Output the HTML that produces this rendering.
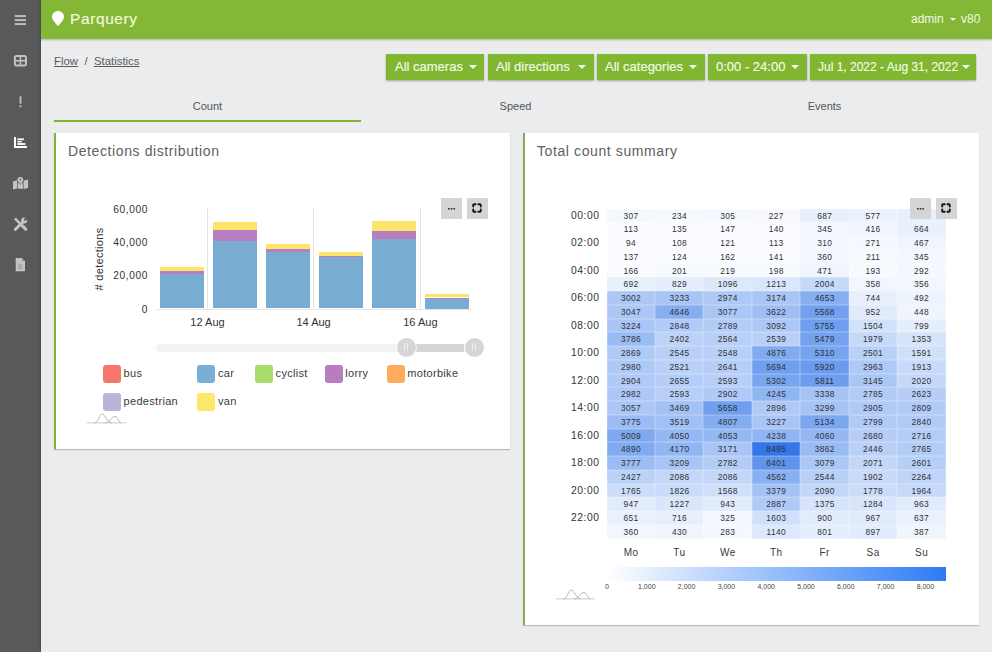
<!DOCTYPE html>
<html><head><meta charset="utf-8">
<style>
*{margin:0;padding:0;box-sizing:border-box}
html,body{width:992px;height:652px;overflow:hidden;background:#ebecee;font-family:"Liberation Sans",sans-serif;position:relative}
.stk{-webkit-text-stroke:0.15px currentColor}
.a{position:absolute}
#side{position:absolute;left:0;top:0;width:40.5px;height:652px;background:#58595b;box-shadow:inset -1.5px 0 0 #4c4d4f;z-index:2}
#head{position:absolute;left:40px;top:0;width:952px;height:38.5px;background:#83b735;box-shadow:0 1px 2px rgba(0,0,0,.25)}
.btn{position:absolute;top:54px;height:26px;background:#80b630;-webkit-text-stroke:0.15px currentColor;color:#f4fbe8;font-size:13px;line-height:26px;white-space:nowrap;box-shadow:0 1px 2px rgba(0,0,0,.3)}
.btn span{position:absolute;top:0}
.caret{position:absolute;top:10.5px;width:0;height:0;border-left:4px solid transparent;border-right:4px solid transparent;border-top:4px solid #f4fbe8}
.tab{position:absolute;top:99px;font-size:11px;color:#555;line-height:14px;text-align:center;width:307px}
.card{position:absolute;background:#fff;border-left:2px solid #7fb140;box-shadow:0 1px 1px rgba(0,0,0,.22)}
.title{position:absolute;font-size:14px;color:#606060;letter-spacing:0.6px;line-height:16px;white-space:nowrap}
.ib{position:absolute;width:21px;height:21px;background:#d5d5d7}
.bar{position:absolute;width:44px}
.yl{position:absolute;right:844px;font-size:10.2px;color:#333;letter-spacing:0.6px;line-height:12px;margin-top:1px;white-space:nowrap}
.xl{position:absolute;top:316px;font-size:11px;color:#333;line-height:12px;width:60px;text-align:center}
.sw{position:absolute;width:18px;height:17.5px;border-radius:3px;margin-left:0.5px}
.lt{position:absolute;font-size:11px;color:#3a3a3a;line-height:18px;letter-spacing:0.3px;white-space:nowrap}
.hc{position:absolute;font-size:8.4px;color:#303236;text-align:center;line-height:15px;letter-spacing:0.35px;text-indent:0.35px;box-shadow:inset 0 0 0 0.5px rgba(255,255,255,.35)}
.hl{position:absolute;left:560px;width:39.5px;text-align:right;font-size:10.3px;color:#333;line-height:14px;letter-spacing:0.55px;margin-top:0.3px}
.dl{position:absolute;top:545.7px;text-align:center;font-size:10px;color:#3a3a3a;line-height:14px;letter-spacing:0.45px;text-indent:0.45px}
.sl{position:absolute;top:582px;width:40px;text-align:center;font-size:7px;color:#444;line-height:9px}
</style></head><body>
<div id="side">
<svg class="a" style="left:0;top:0" width="41" height="290" viewBox="0 0 41 290">
<g fill="#bdbdbd">
<rect x="14.7" y="15.1" width="11.3" height="2"/><rect x="14.7" y="19.1" width="11.3" height="2"/><rect x="14.7" y="23.1" width="11.3" height="2"/>
</g>
<rect x="14.9" y="56.1" width="11.1" height="9.3" rx="1.6" fill="none" stroke="#c2c2c2" stroke-width="2"/>
<rect x="19.6" y="56" width="1.6" height="10" fill="#c2c2c2"/><rect x="14" y="59.9" width="13" height="1.7" fill="#c2c2c2"/>
<rect x="19.5" y="96" width="2" height="8" rx="1" fill="#b5b5b5"/><rect x="19.5" y="105.2" width="2" height="2" fill="#b5b5b5"/>
<g fill="#fff">
<path d="M14 137h2v9h11v2H14z"/>
<rect x="17.3" y="138.4" width="6.6" height="1.7"/><rect x="17.3" y="140.9" width="4.6" height="1.5"/><rect x="17.3" y="143.1" width="8.1" height="1.8"/>
</g>
<g fill="#c4c4c4">
<path d="M13 181.5l4-1.3v8.2l-4 1.2z"/>
<path d="M17.7 182.7l1.5 0.6 1.1 1.6 1.1-1.6 1.5-0.6v6.2l-5.2-0.5z"/>
<path d="M23.6 180.8l4.5-1.3v8.4l-4.5 1.2z"/>
<path d="M20.3 176.9a2.9 2.9 0 0 1 2.9 2.9c0 1.6-2.9 4.2-2.9 4.2s-2.9-2.6-2.9-4.2a2.9 2.9 0 0 1 2.9-2.9z"/>
</g>
<circle cx="20.3" cy="179.6" r="0.9" fill="#58595b"/>
<g stroke="#c4c4c4" stroke-linecap="round" fill="none">
<line x1="15.6" y1="219.2" x2="19.6" y2="223.2" stroke-width="2.6"/>
<line x1="21.6" y1="225.2" x2="25.7" y2="229.2" stroke-width="3.2"/>
<line x1="15.4" y1="229.4" x2="22.6" y2="222.2" stroke-width="2.9"/>
</g>
<circle cx="24.2" cy="220.6" r="3" fill="#c4c4c4"/>
<circle cx="25.3" cy="219.5" r="1.3" fill="#58595b"/>
<path d="M25.3 218.2l3-3 1.8 1.8-3 3z" fill="#58595b"/>
<path d="M15.7 258h6.3l3 3v10.2h-9.3z" fill="#c4c4c4"/>
<path d="M22 258v3h3" fill="#58595b" opacity="0.5"/>
<g fill="#8a8a8c"><rect x="18" y="264.5" width="4.5" height="0.8"/><rect x="18" y="266.3" width="4.5" height="0.8"/><rect x="18" y="268.1" width="4.5" height="0.8"/></g>
</svg>
</div>
<div id="head"></div>
<svg class="a" style="left:52px;top:11px" width="12" height="15" viewBox="0 0 12 15"><path d="M6 0C2.7 0 0 2.6 0 5.8 0 9.5 6 15 6 15s6-5.5 6-9.2C12 2.6 9.3 0 6 0z" fill="#fff"/></svg>
<div class="a stk" style="left:70px;top:9px;font-size:15.5px;color:#f2fadf;letter-spacing:0.6px;line-height:20px">Parquery</div>
<div class="a" style="left:911px;top:12px;font-size:12px;color:#f0f9e0;line-height:14px">admin</div>
<div class="a" style="left:949.5px;top:17.5px;width:0;height:0;border-left:3px solid transparent;border-right:3px solid transparent;border-top:3px solid #f0f9e0"></div>
<div class="a" style="left:961px;top:12px;font-size:12px;color:#f0f9e0;line-height:14px">v80</div>

<div class="a" style="left:54px;top:53.5px;font-size:11.4px;color:#5a5a5a;line-height:14px;white-space:nowrap"><span style="text-decoration:underline">Flow</span>&nbsp; /&nbsp; <span style="text-decoration:underline">Statistics</span></div>

<div class="btn" style="left:386px;width:98px"><span style="left:9px">All cameras</span><div class="caret" style="left:83px"></div></div>
<div class="btn" style="left:488px;width:106px"><span style="left:8px">All directions</span><div class="caret" style="left:90px"></div></div>
<div class="btn" style="left:597px;width:108px"><span style="left:8px">All categories</span><div class="caret" style="left:92px"></div></div>
<div class="btn" style="left:708px;width:99px"><span style="left:8px">0:00 - 24:00</span><div class="caret" style="left:83px"></div></div>
<div class="btn" style="left:810px;width:166px;font-size:12px"><span style="left:8px">Jul 1, 2022 - Aug 31, 2022</span><div class="caret" style="left:152px"></div></div>

<div class="tab" style="left:54px">Count</div>
<div class="tab" style="left:362px">Speed</div>
<div class="tab" style="left:671px">Events</div>
<div class="a" style="left:54px;top:120px;width:307px;height:2px;background:#7db532"></div>

<div class="card" style="left:54px;top:133px;width:456px;height:316px"></div>
<div class="title" style="left:68px;top:143px">Detections distribution</div>
<div class="ib" style="left:441px;top:198px"><svg class="a" style="left:7px;top:10px" width="7" height="2"><rect x="0" y="0" width="1.6" height="1.6" fill="#333"/><rect x="2.7" y="0" width="1.6" height="1.6" fill="#333"/><rect x="5.4" y="0" width="1.6" height="1.6" fill="#333"/></svg></div>
<div class="ib" style="left:467px;top:198px"><svg class="a" style="left:5px;top:5px" width="10" height="10" viewBox="0 0 10 10"><path d="M1.2 3.6V2.2q0-1 1-1h1.4 M6.4 1.2h1.4q1 0 1 1v1.4 M8.8 6.4v1.4q0 1-1 1H6.4 M3.6 8.8H2.2q-1 0-1-1V6.4" stroke="#111" stroke-width="1.9" fill="none" stroke-linecap="round"/></svg></div>

<div class="a" style="left:207px;top:208px;width:1px;height:101px;background:#e3e3e3"></div>
<div class="a" style="left:313px;top:208px;width:1px;height:101px;background:#e3e3e3"></div>
<div class="a" style="left:420px;top:208px;width:1px;height:101px;background:#e3e3e3"></div>
<div class="a" style="left:156px;top:308.5px;width:317px;height:1px;background:#e6e6e6"></div>
<div class="bar" style="left:159.6px;top:274.3px;height:34.19999999999999px;background:#78acd3"></div><div class="bar" style="left:159.6px;top:271.3px;height:3.0px;background:#b77fc0"></div><div class="bar" style="left:159.6px;top:266.6px;height:4.699999999999989px;background:#fde56c"></div><div class="bar" style="left:212.7px;top:240.9px;height:67.6px;background:#78acd3"></div><div class="bar" style="left:212.7px;top:230.3px;height:10.599999999999994px;background:#b77fc0"></div><div class="bar" style="left:212.7px;top:222.2px;height:8.100000000000023px;background:#fde56c"></div><div class="bar" style="left:266px;top:251.7px;height:56.80000000000001px;background:#78acd3"></div><div class="bar" style="left:266px;top:249.4px;height:2.299999999999983px;background:#b77fc0"></div><div class="bar" style="left:266px;top:244.3px;height:5.099999999999994px;background:#fde56c"></div><div class="bar" style="left:318.8px;top:256.6px;height:51.89999999999998px;background:#78acd3"></div><div class="bar" style="left:318.8px;top:255.6px;height:1.0000000000000284px;background:#b77fc0"></div><div class="bar" style="left:318.8px;top:251.7px;height:3.9000000000000057px;background:#fde56c"></div><div class="bar" style="left:372px;top:238.9px;height:69.6px;background:#78acd3"></div><div class="bar" style="left:372px;top:231px;height:7.900000000000006px;background:#b77fc0"></div><div class="bar" style="left:372px;top:221.2px;height:9.800000000000011px;background:#fde56c"></div><div class="bar" style="left:425.3px;top:298px;height:10.5px;background:#78acd3"></div><div class="bar" style="left:425.3px;top:297.5px;height:0.5px;background:#b77fc0"></div><div class="bar" style="left:425.3px;top:294.4px;height:3.1000000000000227px;background:#fde56c"></div>
<div class="yl" style="top:202.5px">60,000</div>
<div class="yl" style="top:235.5px">40,000</div>
<div class="yl" style="top:269px">20,000</div>
<div class="yl" style="top:302.5px">0</div>
<div class="a" style="left:59px;top:252px;width:80px;height:14px;font-size:11px;color:#333;line-height:14px;text-align:center;transform:rotate(-90deg);white-space:nowrap;letter-spacing:0.3px">#&nbsp;detections</div>
<div class="xl" style="left:177.5px">12 Aug</div>
<div class="xl" style="left:283.6px">14 Aug</div>
<div class="xl" style="left:390.4px">16 Aug</div>

<div class="a" style="left:156px;top:343.5px;width:320px;height:8px;border-radius:4px;background:#f2f3f5"></div>
<div class="a" style="left:416px;top:343.5px;width:48px;height:8px;background:#d5d6d8"></div>
<div class="a" style="left:396.5px;top:337.7px;width:19.5px;height:19.5px;border-radius:50%;background:#d5d6d8;box-shadow:0 0 0 1px rgba(255,255,255,.7)"></div>
<div class="a" style="left:464.5px;top:337.7px;width:19.5px;height:19.5px;border-radius:50%;background:#d5d6d8;box-shadow:0 0 0 1px rgba(255,255,255,.7)"></div>
<div class="a" style="left:404px;top:343px;width:1px;height:8px;background:#eceded"></div>
<div class="a" style="left:407px;top:343px;width:1px;height:8px;background:#eceded"></div>
<div class="a" style="left:472px;top:343px;width:1px;height:8px;background:#eceded"></div>
<div class="a" style="left:475px;top:343px;width:1px;height:8px;background:#eceded"></div>
<div class="sw" style="left:102.3px;top:365px;background:#f7766b"></div><div class="lt" style="left:123.6px;top:364px">bus</div><div class="sw" style="left:196.7px;top:365px;background:#7aafd5"></div><div class="lt" style="left:218.0px;top:364px">car</div><div class="sw" style="left:254.3px;top:365px;background:#a8dc6a"></div><div class="lt" style="left:275.6px;top:364px">cyclist</div><div class="sw" style="left:324px;top:365px;background:#b87dbf"></div><div class="lt" style="left:345.3px;top:364px">lorry</div><div class="sw" style="left:386px;top:365px;background:#fdab5c"></div><div class="lt" style="left:407.3px;top:364px">motorbike</div><div class="sw" style="left:102.3px;top:393.4px;background:#b8b5d8"></div><div class="lt" style="left:123.6px;top:392.4px">pedestrian</div><div class="sw" style="left:196.7px;top:393.4px;background:#fde86a"></div><div class="lt" style="left:218.0px;top:392.4px">van</div>
<svg class="a" style="left:87px;top:413px" width="40" height="11" viewBox="0 0 40 11"><path d="M0 9.9h39" stroke="#c4c4c4" stroke-width="0.9"/><path d="M7.5 9.9C11.5 9.9 12.2 1.1 15.2 1.1S20 9.9 25 9.9 M18 9.9C23 9.9 24.5 3.4 27.9 3.4S31.5 9.9 34 9.9" stroke="#b0b0b0" stroke-width="0.9" fill="none"/></svg>

<div class="card" style="left:523px;top:133px;width:456px;height:492px;border-left-color:#8ea65a"></div>
<div class="title" style="left:537px;top:143px">Total count summary</div>
<div class="hc" style="left:606.60px;top:208.50px;width:48.43px;height:13.75px;background:#f4f8fe">307</div>
<div class="hc" style="left:655.03px;top:208.50px;width:48.43px;height:13.75px;background:#f6f9fe">234</div>
<div class="hc" style="left:703.46px;top:208.50px;width:48.43px;height:13.75px;background:#f4f8fe">305</div>
<div class="hc" style="left:751.89px;top:208.50px;width:48.43px;height:13.75px;background:#f7f9fe">227</div>
<div class="hc" style="left:800.31px;top:208.50px;width:48.43px;height:13.75px;background:#e9f0fc">687</div>
<div class="hc" style="left:848.74px;top:208.50px;width:48.43px;height:13.75px;background:#ecf2fd">577</div>
<div class="hc" style="left:897.17px;top:208.50px;width:48.43px;height:13.75px;background:#e8f0fc">700</div>
<div class="hc" style="left:606.60px;top:222.25px;width:48.43px;height:13.75px;background:#fafcfe">113</div>
<div class="hc" style="left:655.03px;top:222.25px;width:48.43px;height:13.75px;background:#fafbfe">135</div>
<div class="hc" style="left:703.46px;top:222.25px;width:48.43px;height:13.75px;background:#f9fbfe">147</div>
<div class="hc" style="left:751.89px;top:222.25px;width:48.43px;height:13.75px;background:#f9fbfe">140</div>
<div class="hc" style="left:800.31px;top:222.25px;width:48.43px;height:13.75px;background:#f3f7fe">345</div>
<div class="hc" style="left:848.74px;top:222.25px;width:48.43px;height:13.75px;background:#f1f5fd">416</div>
<div class="hc" style="left:897.17px;top:222.25px;width:48.43px;height:13.75px;background:#e9f0fd">664</div>
<div class="hc" style="left:606.60px;top:236.00px;width:48.43px;height:13.75px;background:#fbfcff">94</div>
<div class="hc" style="left:655.03px;top:236.00px;width:48.43px;height:13.75px;background:#fbfcff">108</div>
<div class="hc" style="left:703.46px;top:236.00px;width:48.43px;height:13.75px;background:#fafcfe">121</div>
<div class="hc" style="left:751.89px;top:236.00px;width:48.43px;height:13.75px;background:#fafcfe">113</div>
<div class="hc" style="left:800.31px;top:236.00px;width:48.43px;height:13.75px;background:#f4f8fe">310</div>
<div class="hc" style="left:848.74px;top:236.00px;width:48.43px;height:13.75px;background:#f5f8fe">271</div>
<div class="hc" style="left:897.17px;top:236.00px;width:48.43px;height:13.75px;background:#eff4fd">467</div>
<div class="hc" style="left:606.60px;top:249.75px;width:48.43px;height:13.75px;background:#fafbfe">137</div>
<div class="hc" style="left:655.03px;top:249.75px;width:48.43px;height:13.75px;background:#fafcfe">124</div>
<div class="hc" style="left:703.46px;top:249.75px;width:48.43px;height:13.75px;background:#f9fbfe">162</div>
<div class="hc" style="left:751.89px;top:249.75px;width:48.43px;height:13.75px;background:#f9fbfe">141</div>
<div class="hc" style="left:800.31px;top:249.75px;width:48.43px;height:13.75px;background:#f2f7fe">360</div>
<div class="hc" style="left:848.74px;top:249.75px;width:48.43px;height:13.75px;background:#f7fafe">211</div>
<div class="hc" style="left:897.17px;top:249.75px;width:48.43px;height:13.75px;background:#f3f7fe">345</div>
<div class="hc" style="left:606.60px;top:263.50px;width:48.43px;height:13.75px;background:#f9fbfe">166</div>
<div class="hc" style="left:655.03px;top:263.50px;width:48.43px;height:13.75px;background:#f7fafe">201</div>
<div class="hc" style="left:703.46px;top:263.50px;width:48.43px;height:13.75px;background:#f7fafe">219</div>
<div class="hc" style="left:751.89px;top:263.50px;width:48.43px;height:13.75px;background:#f7fafe">198</div>
<div class="hc" style="left:800.31px;top:263.50px;width:48.43px;height:13.75px;background:#eff4fd">471</div>
<div class="hc" style="left:848.74px;top:263.50px;width:48.43px;height:13.75px;background:#f8fafe">193</div>
<div class="hc" style="left:897.17px;top:263.50px;width:48.43px;height:13.75px;background:#f4f8fe">292</div>
<div class="hc" style="left:606.60px;top:277.25px;width:48.43px;height:13.75px;background:#e8f0fc">692</div>
<div class="hc" style="left:655.03px;top:277.25px;width:48.43px;height:13.75px;background:#e5edfc">829</div>
<div class="hc" style="left:703.46px;top:277.25px;width:48.43px;height:13.75px;background:#dde8fb">1096</div>
<div class="hc" style="left:751.89px;top:277.25px;width:48.43px;height:13.75px;background:#dae6fb">1213</div>
<div class="hc" style="left:800.31px;top:277.25px;width:48.43px;height:13.75px;background:#c5d9f9">2004</div>
<div class="hc" style="left:848.74px;top:277.25px;width:48.43px;height:13.75px;background:#f2f7fe">358</div>
<div class="hc" style="left:897.17px;top:277.25px;width:48.43px;height:13.75px;background:#f2f7fe">356</div>
<div class="hc" style="left:606.60px;top:291.00px;width:48.43px;height:13.75px;background:#adc8f6">3002</div>
<div class="hc" style="left:655.03px;top:291.00px;width:48.43px;height:13.75px;background:#a7c4f5">3233</div>
<div class="hc" style="left:703.46px;top:291.00px;width:48.43px;height:13.75px;background:#aec9f6">2974</div>
<div class="hc" style="left:751.89px;top:291.00px;width:48.43px;height:13.75px;background:#a9c5f5">3174</div>
<div class="hc" style="left:800.31px;top:291.00px;width:48.43px;height:13.75px;background:#86aef1">4653</div>
<div class="hc" style="left:848.74px;top:291.00px;width:48.43px;height:13.75px;background:#e7effc">744</div>
<div class="hc" style="left:897.17px;top:291.00px;width:48.43px;height:13.75px;background:#eef4fd">492</div>
<div class="hc" style="left:606.60px;top:304.75px;width:48.43px;height:13.75px;background:#acc7f6">3047</div>
<div class="hc" style="left:655.03px;top:304.75px;width:48.43px;height:13.75px;background:#86aef1">4646</div>
<div class="hc" style="left:703.46px;top:304.75px;width:48.43px;height:13.75px;background:#abc7f6">3077</div>
<div class="hc" style="left:751.89px;top:304.75px;width:48.43px;height:13.75px;background:#9ebef4">3622</div>
<div class="hc" style="left:800.31px;top:304.75px;width:48.43px;height:13.75px;background:#72a1ef">5568</div>
<div class="hc" style="left:848.74px;top:304.75px;width:48.43px;height:13.75px;background:#e1ebfc">952</div>
<div class="hc" style="left:897.17px;top:304.75px;width:48.43px;height:13.75px;background:#f0f5fd">448</div>
<div class="hc" style="left:606.60px;top:318.50px;width:48.43px;height:13.75px;background:#a8c5f5">3224</div>
<div class="hc" style="left:655.03px;top:318.50px;width:48.43px;height:13.75px;background:#b1cbf6">2848</div>
<div class="hc" style="left:703.46px;top:318.50px;width:48.43px;height:13.75px;background:#b2ccf6">2789</div>
<div class="hc" style="left:751.89px;top:318.50px;width:48.43px;height:13.75px;background:#abc7f6">3092</div>
<div class="hc" style="left:800.31px;top:318.50px;width:48.43px;height:13.75px;background:#6d9eef">5755</div>
<div class="hc" style="left:848.74px;top:318.50px;width:48.43px;height:13.75px;background:#d2e1fa">1504</div>
<div class="hc" style="left:897.17px;top:318.50px;width:48.43px;height:13.75px;background:#e5eefc">799</div>
<div class="hc" style="left:606.60px;top:332.25px;width:48.43px;height:13.75px;background:#9abcf4">3786</div>
<div class="hc" style="left:655.03px;top:332.25px;width:48.43px;height:13.75px;background:#bcd2f7">2402</div>
<div class="hc" style="left:703.46px;top:332.25px;width:48.43px;height:13.75px;background:#b8cff7">2564</div>
<div class="hc" style="left:751.89px;top:332.25px;width:48.43px;height:13.75px;background:#b8d0f7">2539</div>
<div class="hc" style="left:800.31px;top:332.25px;width:48.43px;height:13.75px;background:#74a2ef">5479</div>
<div class="hc" style="left:848.74px;top:332.25px;width:48.43px;height:13.75px;background:#c6d9f9">1979</div>
<div class="hc" style="left:897.17px;top:332.25px;width:48.43px;height:13.75px;background:#d6e4fa">1353</div>
<div class="hc" style="left:606.60px;top:346.00px;width:48.43px;height:13.75px;background:#b0caf6">2869</div>
<div class="hc" style="left:655.03px;top:346.00px;width:48.43px;height:13.75px;background:#b8d0f7">2545</div>
<div class="hc" style="left:703.46px;top:346.00px;width:48.43px;height:13.75px;background:#b8d0f7">2548</div>
<div class="hc" style="left:751.89px;top:346.00px;width:48.43px;height:13.75px;background:#81abf1">4876</div>
<div class="hc" style="left:800.31px;top:346.00px;width:48.43px;height:13.75px;background:#77a4f0">5310</div>
<div class="hc" style="left:848.74px;top:346.00px;width:48.43px;height:13.75px;background:#b9d0f7">2501</div>
<div class="hc" style="left:897.17px;top:346.00px;width:48.43px;height:13.75px;background:#d0e0fa">1591</div>
<div class="hc" style="left:606.60px;top:359.75px;width:48.43px;height:13.75px;background:#adc9f6">2980</div>
<div class="hc" style="left:655.03px;top:359.75px;width:48.43px;height:13.75px;background:#b9d0f7">2521</div>
<div class="hc" style="left:703.46px;top:359.75px;width:48.43px;height:13.75px;background:#b6cef7">2641</div>
<div class="hc" style="left:751.89px;top:359.75px;width:48.43px;height:13.75px;background:#6f9fef">5694</div>
<div class="hc" style="left:800.31px;top:359.75px;width:48.43px;height:13.75px;background:#6a9bee">5920</div>
<div class="hc" style="left:848.74px;top:359.75px;width:48.43px;height:13.75px;background:#aec9f6">2963</div>
<div class="hc" style="left:897.17px;top:359.75px;width:48.43px;height:13.75px;background:#c8daf9">1913</div>
<div class="hc" style="left:606.60px;top:373.50px;width:48.43px;height:13.75px;background:#afcaf6">2904</div>
<div class="hc" style="left:655.03px;top:373.50px;width:48.43px;height:13.75px;background:#b5cef7">2655</div>
<div class="hc" style="left:703.46px;top:373.50px;width:48.43px;height:13.75px;background:#b7cff7">2593</div>
<div class="hc" style="left:751.89px;top:373.50px;width:48.43px;height:13.75px;background:#78a5f0">5302</div>
<div class="hc" style="left:800.31px;top:373.50px;width:48.43px;height:13.75px;background:#6c9def">5811</div>
<div class="hc" style="left:848.74px;top:373.50px;width:48.43px;height:13.75px;background:#a9c6f5">3145</div>
<div class="hc" style="left:897.17px;top:373.50px;width:48.43px;height:13.75px;background:#c5d8f9">2020</div>
<div class="hc" style="left:606.60px;top:387.25px;width:48.43px;height:13.75px;background:#adc8f6">2982</div>
<div class="hc" style="left:655.03px;top:387.25px;width:48.43px;height:13.75px;background:#b7cff7">2593</div>
<div class="hc" style="left:703.46px;top:387.25px;width:48.43px;height:13.75px;background:#afcaf6">2902</div>
<div class="hc" style="left:751.89px;top:387.25px;width:48.43px;height:13.75px;background:#90b5f3">4245</div>
<div class="hc" style="left:800.31px;top:387.25px;width:48.43px;height:13.75px;background:#a5c3f5">3338</div>
<div class="hc" style="left:848.74px;top:387.25px;width:48.43px;height:13.75px;background:#b2ccf6">2785</div>
<div class="hc" style="left:897.17px;top:387.25px;width:48.43px;height:13.75px;background:#b6cef7">2623</div>
<div class="hc" style="left:606.60px;top:401.00px;width:48.43px;height:13.75px;background:#acc7f6">3057</div>
<div class="hc" style="left:655.03px;top:401.00px;width:48.43px;height:13.75px;background:#a2c1f5">3469</div>
<div class="hc" style="left:703.46px;top:401.00px;width:48.43px;height:13.75px;background:#709fef">5658</div>
<div class="hc" style="left:751.89px;top:401.00px;width:48.43px;height:13.75px;background:#afcaf6">2896</div>
<div class="hc" style="left:800.31px;top:401.00px;width:48.43px;height:13.75px;background:#a6c3f5">3299</div>
<div class="hc" style="left:848.74px;top:401.00px;width:48.43px;height:13.75px;background:#afcaf6">2905</div>
<div class="hc" style="left:897.17px;top:401.00px;width:48.43px;height:13.75px;background:#b2cbf6">2809</div>
<div class="hc" style="left:606.60px;top:414.75px;width:48.43px;height:13.75px;background:#9bbcf4">3775</div>
<div class="hc" style="left:655.03px;top:414.75px;width:48.43px;height:13.75px;background:#a1c0f4">3519</div>
<div class="hc" style="left:703.46px;top:414.75px;width:48.43px;height:13.75px;background:#83acf1">4807</div>
<div class="hc" style="left:751.89px;top:414.75px;width:48.43px;height:13.75px;background:#a8c5f5">3227</div>
<div class="hc" style="left:800.31px;top:414.75px;width:48.43px;height:13.75px;background:#7ba7f0">5134</div>
<div class="hc" style="left:848.74px;top:414.75px;width:48.43px;height:13.75px;background:#b2cbf6">2799</div>
<div class="hc" style="left:897.17px;top:414.75px;width:48.43px;height:13.75px;background:#b1cbf6">2840</div>
<div class="hc" style="left:606.60px;top:428.50px;width:48.43px;height:13.75px;background:#7ea9f1">5009</div>
<div class="hc" style="left:655.03px;top:428.50px;width:48.43px;height:13.75px;background:#94b8f3">4050</div>
<div class="hc" style="left:703.46px;top:428.50px;width:48.43px;height:13.75px;background:#94b8f3">4053</div>
<div class="hc" style="left:751.89px;top:428.50px;width:48.43px;height:13.75px;background:#90b5f3">4238</div>
<div class="hc" style="left:800.31px;top:428.50px;width:48.43px;height:13.75px;background:#94b7f3">4060</div>
<div class="hc" style="left:848.74px;top:428.50px;width:48.43px;height:13.75px;background:#b5cdf7">2680</div>
<div class="hc" style="left:897.17px;top:428.50px;width:48.43px;height:13.75px;background:#b4cdf7">2716</div>
<div class="hc" style="left:606.60px;top:442.25px;width:48.43px;height:13.75px;background:#81abf1">4890</div>
<div class="hc" style="left:655.03px;top:442.25px;width:48.43px;height:13.75px;background:#91b6f3">4170</div>
<div class="hc" style="left:703.46px;top:442.25px;width:48.43px;height:13.75px;background:#a9c5f5">3171</div>
<div class="hc" style="left:751.89px;top:442.25px;width:48.43px;height:13.75px;background:#3276e8">8495</div>
<div class="hc" style="left:800.31px;top:442.25px;width:48.43px;height:13.75px;background:#99bbf4">3862</div>
<div class="hc" style="left:848.74px;top:442.25px;width:48.43px;height:13.75px;background:#bad1f7">2446</div>
<div class="hc" style="left:897.17px;top:442.25px;width:48.43px;height:13.75px;background:#b3ccf6">2765</div>
<div class="hc" style="left:606.60px;top:456.00px;width:48.43px;height:13.75px;background:#9bbcf4">3777</div>
<div class="hc" style="left:655.03px;top:456.00px;width:48.43px;height:13.75px;background:#a8c5f5">3209</div>
<div class="hc" style="left:703.46px;top:456.00px;width:48.43px;height:13.75px;background:#b2ccf6">2782</div>
<div class="hc" style="left:751.89px;top:456.00px;width:48.43px;height:13.75px;background:#5f94ed">6401</div>
<div class="hc" style="left:800.31px;top:456.00px;width:48.43px;height:13.75px;background:#abc7f6">3079</div>
<div class="hc" style="left:848.74px;top:456.00px;width:48.43px;height:13.75px;background:#c4d7f8">2071</div>
<div class="hc" style="left:897.17px;top:456.00px;width:48.43px;height:13.75px;background:#b7cff7">2601</div>
<div class="hc" style="left:606.60px;top:469.75px;width:48.43px;height:13.75px;background:#bbd2f7">2427</div>
<div class="hc" style="left:655.03px;top:469.75px;width:48.43px;height:13.75px;background:#c3d7f8">2086</div>
<div class="hc" style="left:703.46px;top:469.75px;width:48.43px;height:13.75px;background:#c3d7f8">2086</div>
<div class="hc" style="left:751.89px;top:469.75px;width:48.43px;height:13.75px;background:#88b0f2">4562</div>
<div class="hc" style="left:800.31px;top:469.75px;width:48.43px;height:13.75px;background:#b8d0f7">2544</div>
<div class="hc" style="left:848.74px;top:469.75px;width:48.43px;height:13.75px;background:#c8daf9">1902</div>
<div class="hc" style="left:897.17px;top:469.75px;width:48.43px;height:13.75px;background:#bfd4f8">2264</div>
<div class="hc" style="left:606.60px;top:483.50px;width:48.43px;height:13.75px;background:#ccddf9">1765</div>
<div class="hc" style="left:655.03px;top:483.50px;width:48.43px;height:13.75px;background:#cadcf9">1826</div>
<div class="hc" style="left:703.46px;top:483.50px;width:48.43px;height:13.75px;background:#d1e0fa">1568</div>
<div class="hc" style="left:751.89px;top:483.50px;width:48.43px;height:13.75px;background:#a4c2f5">3379</div>
<div class="hc" style="left:800.31px;top:483.50px;width:48.43px;height:13.75px;background:#c3d7f8">2090</div>
<div class="hc" style="left:848.74px;top:483.50px;width:48.43px;height:13.75px;background:#cbdcf9">1778</div>
<div class="hc" style="left:897.17px;top:483.50px;width:48.43px;height:13.75px;background:#c6d9f9">1964</div>
<div class="hc" style="left:606.60px;top:497.25px;width:48.43px;height:13.75px;background:#e1ebfc">947</div>
<div class="hc" style="left:655.03px;top:497.25px;width:48.43px;height:13.75px;background:#dae6fb">1227</div>
<div class="hc" style="left:703.46px;top:497.25px;width:48.43px;height:13.75px;background:#e1ebfc">943</div>
<div class="hc" style="left:751.89px;top:497.25px;width:48.43px;height:13.75px;background:#b0caf6">2887</div>
<div class="hc" style="left:800.31px;top:497.25px;width:48.43px;height:13.75px;background:#d6e3fa">1375</div>
<div class="hc" style="left:848.74px;top:497.25px;width:48.43px;height:13.75px;background:#d8e5fb">1284</div>
<div class="hc" style="left:897.17px;top:497.25px;width:48.43px;height:13.75px;background:#e1ebfc">963</div>
<div class="hc" style="left:606.60px;top:511.00px;width:48.43px;height:13.75px;background:#eaf1fd">651</div>
<div class="hc" style="left:655.03px;top:511.00px;width:48.43px;height:13.75px;background:#e8effc">716</div>
<div class="hc" style="left:703.46px;top:511.00px;width:48.43px;height:13.75px;background:#f3f7fe">325</div>
<div class="hc" style="left:751.89px;top:511.00px;width:48.43px;height:13.75px;background:#d0dffa">1603</div>
<div class="hc" style="left:800.31px;top:511.00px;width:48.43px;height:13.75px;background:#e3ecfc">900</div>
<div class="hc" style="left:848.74px;top:511.00px;width:48.43px;height:13.75px;background:#e1ebfc">967</div>
<div class="hc" style="left:897.17px;top:511.00px;width:48.43px;height:13.75px;background:#eaf1fd">637</div>
<div class="hc" style="left:606.60px;top:524.75px;width:48.43px;height:13.75px;background:#f2f7fe">360</div>
<div class="hc" style="left:655.03px;top:524.75px;width:48.43px;height:13.75px;background:#f0f5fd">430</div>
<div class="hc" style="left:703.46px;top:524.75px;width:48.43px;height:13.75px;background:#f5f8fe">283</div>
<div class="hc" style="left:751.89px;top:524.75px;width:48.43px;height:13.75px;background:#dce8fb">1140</div>
<div class="hc" style="left:800.31px;top:524.75px;width:48.43px;height:13.75px;background:#e5eefc">801</div>
<div class="hc" style="left:848.74px;top:524.75px;width:48.43px;height:13.75px;background:#e3ecfc">897</div>
<div class="hc" style="left:897.17px;top:524.75px;width:48.43px;height:13.75px;background:#f1f6fd">387</div>
<div class="hl" style="top:208.38px">00:00</div><div class="hl" style="top:235.88px">02:00</div><div class="hl" style="top:263.38px">04:00</div><div class="hl" style="top:290.88px">06:00</div><div class="hl" style="top:318.38px">08:00</div><div class="hl" style="top:345.88px">10:00</div><div class="hl" style="top:373.38px">12:00</div><div class="hl" style="top:400.88px">14:00</div><div class="hl" style="top:428.38px">16:00</div><div class="hl" style="top:455.88px">18:00</div><div class="hl" style="top:483.38px">20:00</div><div class="hl" style="top:510.88px">22:00</div>
<div class="dl" style="left:606.60px;width:48.43px">Mo</div><div class="dl" style="left:655.03px;width:48.43px">Tu</div><div class="dl" style="left:703.46px;width:48.43px">We</div><div class="dl" style="left:751.89px;width:48.43px">Th</div><div class="dl" style="left:800.31px;width:48.43px">Fr</div><div class="dl" style="left:848.74px;width:48.43px">Sa</div><div class="dl" style="left:897.17px;width:48.43px">Su</div>
<div class="a" style="left:607px;top:567px;width:339px;height:14px;background:linear-gradient(to right,#ffffff,#2c7bf6)"></div>
<div class="sl" style="left:587.00px">0</div><div class="sl" style="left:626.80px">1,000</div><div class="sl" style="left:666.60px">2,000</div><div class="sl" style="left:706.40px">3,000</div><div class="sl" style="left:746.20px">4,000</div><div class="sl" style="left:786.00px">5,000</div><div class="sl" style="left:825.80px">6,000</div><div class="sl" style="left:865.60px">7,000</div><div class="sl" style="left:905.40px">8,000</div>
<svg class="a" style="left:556px;top:589px" width="40" height="11" viewBox="0 0 40 11"><path d="M0 9.9h39" stroke="#c4c4c4" stroke-width="0.9"/><path d="M7.5 9.9C11.5 9.9 12.2 1.1 15.2 1.1S20 9.9 25 9.9 M18 9.9C23 9.9 24.5 3.4 27.9 3.4S31.5 9.9 34 9.9" stroke="#b0b0b0" stroke-width="0.9" fill="none"/></svg>
<div class="ib" style="left:910px;top:198px"><svg class="a" style="left:7px;top:10px" width="7" height="2"><rect x="0" y="0" width="1.6" height="1.6" fill="#333"/><rect x="2.7" y="0" width="1.6" height="1.6" fill="#333"/><rect x="5.4" y="0" width="1.6" height="1.6" fill="#333"/></svg></div>
<div class="ib" style="left:935.5px;top:198px"><svg class="a" style="left:5px;top:5px" width="10" height="10" viewBox="0 0 10 10"><path d="M1.2 3.6V2.2q0-1 1-1h1.4 M6.4 1.2h1.4q1 0 1 1v1.4 M8.8 6.4v1.4q0 1-1 1H6.4 M3.6 8.8H2.2q-1 0-1-1V6.4" stroke="#111" stroke-width="1.9" fill="none" stroke-linecap="round"/></svg></div>
</body></html>
